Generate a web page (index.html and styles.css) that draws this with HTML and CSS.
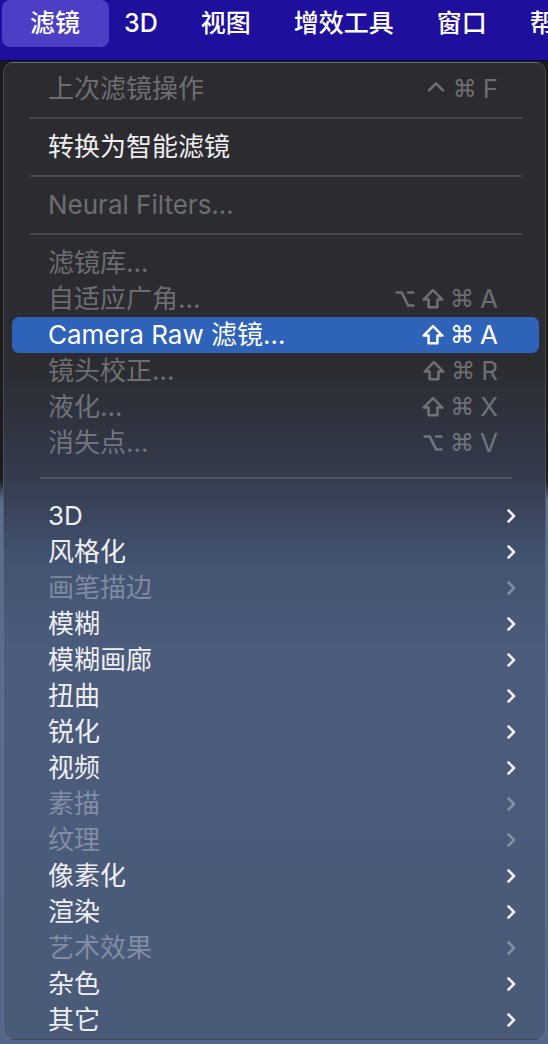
FILE: index.html
```html
<!DOCTYPE html>
<html>
<head>
    <meta charset="utf-8">
    <title>滤镜菜单</title>
    <link rel="stylesheet" href="styles.css">
</head>
<body>
    <div class="menubar">
        <span class="menu-title active">滤镜</span>
        <span class="menu-title">3D</span>
        <span class="menu-title">视图</span>
        <span class="menu-title">增效工具</span>
        <span class="menu-title">窗口</span>
        <span class="menu-title">帮助</span>
    </div>
    <div class="menu">
        <div class="item disabled"><span class="label">上次滤镜操作</span><span class="keys"><svg class="key" viewBox="0 0 20 20"><path d="M3 12 L10 5 L17 12"/></svg><span class="sym">⌘</span>F</span></div>
        <div class="sep"></div>
        <div class="item"><span class="label">转换为智能滤镜</span></div>
        <div class="sep"></div>
        <div class="item disabled"><span class="label">Neural Filters…</span></div>
        <div class="sep"></div>
        <div class="item disabled"><span class="label">滤镜库…</span></div>
        <div class="item disabled"><span class="label">自适应广角…</span><span class="keys"><svg class="key" viewBox="0 0 20 20"><path d="M1.5 4 H7 L13 16 H18.5 M12 4 H18.5"/></svg><svg class="key" viewBox="0 0 20 20"><path d="M10 2 L18.5 10.5 H14 V17.5 H6 V10.5 H1.5 Z"/></svg><span class="sym">⌘</span>A</span></div>
        <div class="item selected"><span class="label">Camera Raw 滤镜…</span><span class="keys"><svg class="key" viewBox="0 0 20 20"><path d="M10 2 L18.5 10.5 H14 V17.5 H6 V10.5 H1.5 Z"/></svg><span class="sym">⌘</span>A</span></div>
        <div class="item disabled"><span class="label">镜头校正…</span><span class="keys"><svg class="key" viewBox="0 0 20 20"><path d="M10 2 L18.5 10.5 H14 V17.5 H6 V10.5 H1.5 Z"/></svg><span class="sym">⌘</span>R</span></div>
        <div class="item disabled"><span class="label">液化…</span><span class="keys"><svg class="key" viewBox="0 0 20 20"><path d="M10 2 L18.5 10.5 H14 V17.5 H6 V10.5 H1.5 Z"/></svg><span class="sym">⌘</span>X</span></div>
        <div class="item disabled"><span class="label">消失点…</span><span class="keys"><svg class="key" viewBox="0 0 20 20"><path d="M1.5 4 H7 L13 16 H18.5 M12 4 H18.5"/></svg><span class="sym">⌘</span>V</span></div>
        <div class="sep wide"></div>
        <div class="item sub"><span class="label">3D</span><svg class="chev" viewBox="0 0 10 16"><path d="M2.5 2.5 L8 8 L2.5 13.5"/></svg></div>
        <div class="item sub"><span class="label">风格化</span><svg class="chev" viewBox="0 0 10 16"><path d="M2.5 2.5 L8 8 L2.5 13.5"/></svg></div>
        <div class="item sub disabled"><span class="label">画笔描边</span><svg class="chev" viewBox="0 0 10 16"><path d="M2.5 2.5 L8 8 L2.5 13.5"/></svg></div>
        <div class="item sub"><span class="label">模糊</span><svg class="chev" viewBox="0 0 10 16"><path d="M2.5 2.5 L8 8 L2.5 13.5"/></svg></div>
        <div class="item sub"><span class="label">模糊画廊</span><svg class="chev" viewBox="0 0 10 16"><path d="M2.5 2.5 L8 8 L2.5 13.5"/></svg></div>
        <div class="item sub"><span class="label">扭曲</span><svg class="chev" viewBox="0 0 10 16"><path d="M2.5 2.5 L8 8 L2.5 13.5"/></svg></div>
        <div class="item sub"><span class="label">锐化</span><svg class="chev" viewBox="0 0 10 16"><path d="M2.5 2.5 L8 8 L2.5 13.5"/></svg></div>
        <div class="item sub"><span class="label">视频</span><svg class="chev" viewBox="0 0 10 16"><path d="M2.5 2.5 L8 8 L2.5 13.5"/></svg></div>
        <div class="item sub disabled"><span class="label">素描</span><svg class="chev" viewBox="0 0 10 16"><path d="M2.5 2.5 L8 8 L2.5 13.5"/></svg></div>
        <div class="item sub disabled"><span class="label">纹理</span><svg class="chev" viewBox="0 0 10 16"><path d="M2.5 2.5 L8 8 L2.5 13.5"/></svg></div>
        <div class="item sub"><span class="label">像素化</span><svg class="chev" viewBox="0 0 10 16"><path d="M2.5 2.5 L8 8 L2.5 13.5"/></svg></div>
        <div class="item sub"><span class="label">渲染</span><svg class="chev" viewBox="0 0 10 16"><path d="M2.5 2.5 L8 8 L2.5 13.5"/></svg></div>
        <div class="item sub disabled"><span class="label">艺术效果</span><svg class="chev" viewBox="0 0 10 16"><path d="M2.5 2.5 L8 8 L2.5 13.5"/></svg></div>
        <div class="item sub"><span class="label">杂色</span><svg class="chev" viewBox="0 0 10 16"><path d="M2.5 2.5 L8 8 L2.5 13.5"/></svg></div>
        <div class="item sub"><span class="label">其它</span><svg class="chev" viewBox="0 0 10 16"><path d="M2.5 2.5 L8 8 L2.5 13.5"/></svg></div>
    </div>
</body>
</html>
```

FILE: styles.css
```css
body {
    margin: 0; height: 1044px; overflow: hidden;
    background: linear-gradient(180deg, #1b1b1e 0, #1b1b1e 480px, #5d6d8c 500px, #56668a 100%);
    font-family: Inter, "Noto Sans CJK SC", sans-serif;
}
.menubar {
    height: 60px; background-color: #1e0f9d;
    border-bottom: 1px solid #0c0b36;
    display: flex; align-items: flex-start;
    white-space: nowrap; overflow: hidden;
}
.menu-title {
    color: #fff; font-size: 25px; font-weight: 500;
    line-height: 46px; margin-left: 43px; flex-shrink: 0;
}
.menu-title.active {
    margin-left: 2px; padding: 0 29px 0 28px; line-height: 47px;
    background-color: #4c3fc6; border-radius: 8px;
}
.active + .menu-title { margin-left: 15px }
.menu {
    margin: 1px 2px 0 3px; padding: 8px 0 1px;
    border: 1px solid rgba(255, 255, 255, 0.13); border-radius: 10px;
    background: linear-gradient(180deg, #2c2c30 0, #2b2c31 300px, #333a4b 410px,
        #435372 500px, #4b5c7c 590px, #4a5a79 100%);
}
.item {
    display: flex; align-items: center; justify-content: space-between;
    height: 36px; margin: 0 6px 0 8px; padding: 0 41px 0 36px;
    border-radius: 7px; color: #eeeef0; font-size: 26px; line-height: 36px;
}
.item.sub { padding-right: 23px }
.item.disabled { color: rgba(255, 255, 255, 0.32) }
.item.selected { background-color: #2f62b9; color: #fff }
.keys { display: flex; align-items: center; font-size: 26px }
.key {
    width: 22px; height: 22px; margin-right: 6px;
    fill: none; stroke: currentColor; stroke-width: 2.3; stroke-linejoin: round;
}
.sym { font-family: "DejaVu Sans", sans-serif; font-size: 24px; margin-right: 6px }
.chev { width: 10px; height: 16px; fill: none; stroke: currentColor; stroke-width: 2.6; stroke-linecap: round; stroke-linejoin: round }
.sep {
    height: 2px; margin: 10px 23px 10px 26px;
    background-color: rgba(255, 255, 255, 0.14);
}
.sep.wide { margin: 16px 33px 19px 36px }
```
